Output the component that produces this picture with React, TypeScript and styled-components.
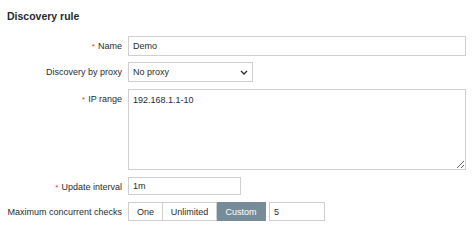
import styled, { createGlobalStyle } from "styled-components";

const Global = createGlobalStyle`
  body {
    margin: 0;
    background: #ffffff;
    font-family: "Liberation Sans", Arial, sans-serif;
    color: #1f2c33;
  }
`;

const Page = styled.div`
  padding: 9px 7px 0 7px;
`;

const Title = styled.h2`
  margin: 0 0 13px 0;
  font-size: 10.5px;
  line-height: 14px;
  font-weight: 700;
  color: #1f2c33;
`;

const Form = styled.div`
  display: grid;
  grid-template-columns: 115px 338px;
  column-gap: 6px;
  align-items: start;
`;

const Label = styled.div`
  font-size: 9px;
  line-height: 20px;
  text-align: right;
  white-space: nowrap;
`;

const Req = styled.span`
  color: #e33734;
  margin-right: 3px;
  font-size: 8px;
`;

const Field = styled.div<{ $gap: number }>`
  margin-bottom: ${(p) => p.$gap}px;
  display: flex;
  gap: 3px;
`;

const Input = styled.input<{ $w: number; $h?: number }>`
  box-sizing: border-box;
  width: ${(p) => p.$w}px;
  height: ${(p) => p.$h ?? 20}px;
  border: 1px solid #cfcfcf;
  padding: 0 4px;
  font-family: "Liberation Sans", Arial, sans-serif;
  font-size: 9px;
  color: #1f2c33;
  background: #fff;
  outline: none;
`;

const SelectBox = styled.div`
  box-sizing: border-box;
  width: 125px;
  height: 20px;
  border: 1px solid #cfcfcf;
  padding: 0 4px 0 4px;
  display: flex;
  align-items: center;
  justify-content: space-between;
  font-size: 9px;
`;

const Area = styled.textarea`
  box-sizing: border-box;
  width: 339px;
  height: 81px;
  border: 1px solid #cfcfcf;
  padding: 5px 4px;
  font-family: "Liberation Sans", Arial, sans-serif;
  font-size: 9px;
  color: #1f2c33;
  outline: none;
  display: block;
`;

const Segments = styled.div`
  display: flex;
`;

const Segment = styled.div<{ $w: number; $on?: boolean }>`
  box-sizing: border-box;
  width: ${(p) => p.$w}px;
  height: 19px;
  border: 1px solid ${(p) => (p.$on ? "#768d99" : "#cfcfcf")};
  border-left-width: 0;
  &:first-child {
    border-left-width: 1px;
  }
  background: ${(p) => (p.$on ? "#768d99" : "#ffffff")};
  color: ${(p) => (p.$on ? "#ffffff" : "#1f2c33")};
  font-size: 9px;
  display: flex;
  align-items: center;
  justify-content: center;
`;

export default function App() {
  return (
    <Page>
      <Global />
      <Title>Discovery rule</Title>
      <Form>
        <Label>
          <Req>*</Req>Name
        </Label>
        <Field $gap={6}>
          <Input $w={338} defaultValue="Demo" />
        </Field>

        <Label>Discovery by proxy</Label>
        <Field $gap={7}>
          <SelectBox>
            <span>No proxy</span>
            <svg width="8" height="5" viewBox="0 0 8 5">
              <path d="M1 1l3 3 3-3" fill="none" stroke="#1f2c33" strokeWidth="1.3" />
            </svg>
          </SelectBox>
        </Field>

        <Label>
          <Req>*</Req>IP range
        </Label>
        <Field $gap={7}>
          <Area defaultValue="192.168.1.1-10" />
        </Field>

        <Label>
          <Req>*</Req>Update interval
        </Label>
        <Field $gap={7}>
          <Input $w={113} $h={18} defaultValue="1m" />
        </Field>

        <Label>Maximum concurrent checks</Label>
        <Field $gap={0}>
          <Segments>
            <Segment $w={35}>One</Segment>
            <Segment $w={54}>Unlimited</Segment>
            <Segment $w={49} $on>
              Custom
            </Segment>
          </Segments>
          <Input $w={56} $h={19} defaultValue="5" />
        </Field>
      </Form>
    </Page>
  );
}
